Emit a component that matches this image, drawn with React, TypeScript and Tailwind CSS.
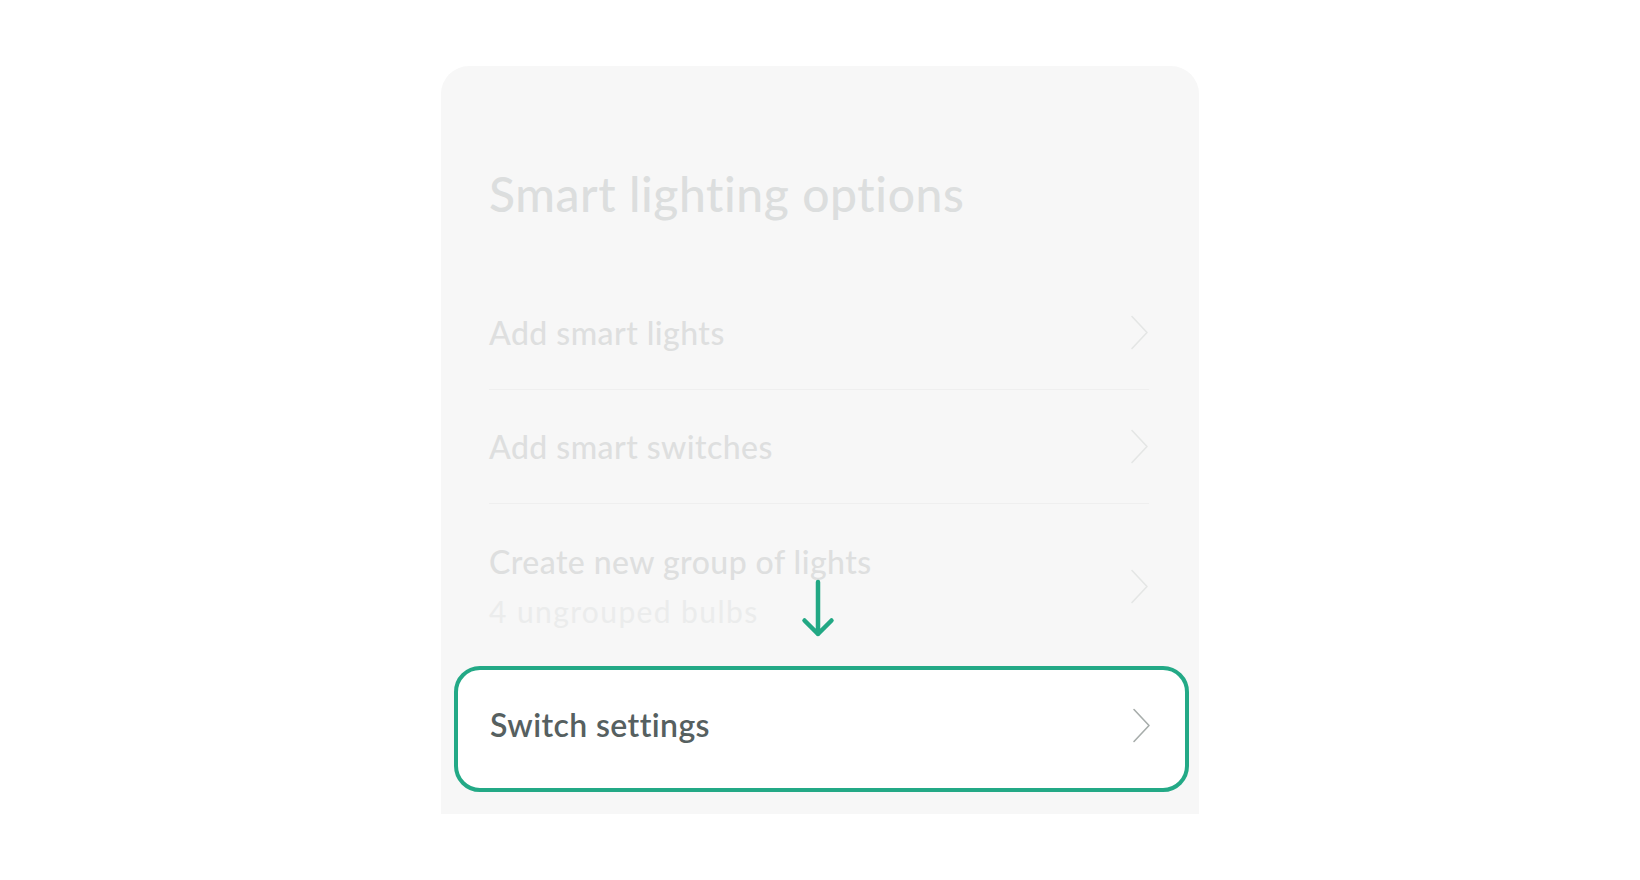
const font = { fontFamily: "Lato, 'Noto Sans', sans-serif" };

function Chevron({ dark }: { dark?: boolean }) {
  return (
    <svg width="19" height="35" viewBox="0 0 19 35" fill="none" className="shrink-0">
      <path
        d="M2 1.5 L17 17.5 L2 33.5"
        stroke={dark ? "#a7adab" : "#e4e6e5"}
        strokeWidth="1.6"
        strokeLinecap="round"
        strokeLinejoin="round"
      />
    </svg>
  );
}

function Row({ title, sub }: { title: string; sub?: string }) {
  return (
    <div
      className={
        sub
          ? "flex h-[162px] items-center justify-between pt-[2px]"
          : "flex h-[114px] items-center justify-between border-b border-[#efefef]"
      }
    >
      <div className="flex flex-col">
        <span className="text-[32px] leading-none font-medium tracking-[0.45px] text-[#dedfdf]">
          {title}
        </span>
        {sub && (
          <span className="mt-[18px] text-[30px] leading-none tracking-[1.4px] text-[#ebecec]">
            {sub}
          </span>
        )}
      </div>
      <Chevron />
    </div>
  );
}

export default function App() {
  return (
    <div className="min-h-screen w-full bg-white pt-[66px]" style={font}>
      <div className="relative mx-auto flex h-[748px] w-[758px] flex-col rounded-t-[28px] bg-[#f7f7f7] pl-[48px] pr-[50px] pt-[104px]">
        <h1 className="text-[48px] leading-none font-medium tracking-[0.6px] text-[#dcdede]">
          Smart lighting options
        </h1>

        <div className="mt-[58px] flex flex-col">
          <Row title="Add smart lights" />
          <Row title="Add smart switches" />
          <Row title="Create new group of lights" sub="4 ungrouped bulbs" />
        </div>

        <div className="-ml-[35px] -mr-[40px] flex h-[126px] items-center justify-between rounded-[26px] border-4 border-[#23a986] bg-white pl-[32px] pr-[34px] pb-[8px]">
          <span className="text-[32px] leading-none font-semibold tracking-[0.4px] text-[#566060]">
            Switch settings
          </span>
          <Chevron dark />
        </div>

        <svg
          width="36"
          height="62"
          viewBox="0 0 36 62"
          fill="none"
          className="absolute left-[359px] top-[512px]"
        >
          <path
            d="M18 4 V56 M4.5 42.5 L18 56 L31.5 42.5"
            stroke="#22a884"
            strokeWidth="4.5"
            strokeLinecap="round"
            strokeLinejoin="round"
          />
        </svg>
      </div>
    </div>
  );
}
